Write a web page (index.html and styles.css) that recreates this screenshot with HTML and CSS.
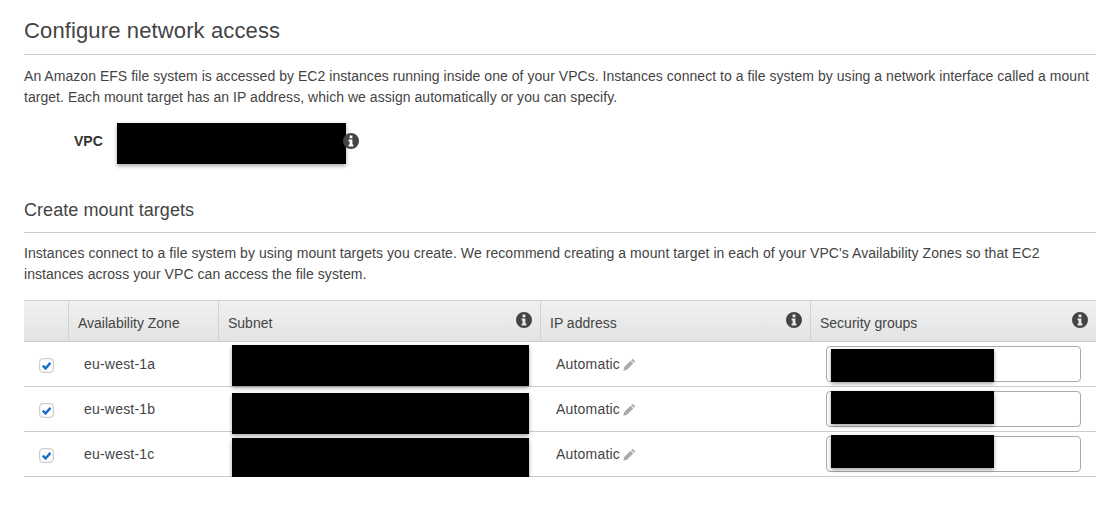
FILE: index.html
```html
<!DOCTYPE html>
<html lang="en">
<head>
    <meta charset="UTF-8">
    <meta name="viewport" content="width=device-width, initial-scale=1.0">
    <title>Configure network access</title>
    <link rel="stylesheet" href="styles.css">
</head>
<body>
    <svg class="icon-defs" width="0" height="0">
        <symbol id="info" viewBox="0 0 16 16">
            <path fill-rule="evenodd" d="M8 0a8 8 0 1 0 0 16A8 8 0 0 0 8 0zM6.6 2.6h2.8v2.6H6.6zM5.6 6.4h3.8v5.2h1v2H5.6v-2h1V8.400h-1z"/>
        </symbol>
        <symbol id="pencil" viewBox="0 0 14 14">
            <path d="M10.300 .8l2.900 2.900-1.500 1.500-2.900-2.900zM8.100 3l2.900 2.900-6.700 6.700-4 1.200 1.100-4.100z"/>
        </symbol>
        <symbol id="tick" viewBox="0 0 14 14">
            <path d="M3 7.200l3 3 5.200-6" fill="none" stroke="#1a6ec8" stroke-width="2.600"/>
        </symbol>
    </svg>

    <div class="page">
        <h2 class="title">Configure network access</h2>
        <p class="intro">An Amazon EFS file system is accessed by EC2 instances running inside one of your VPCs. Instances connect to a file system by using a network interface called a mount target. Each mount target has an IP address, which we assign automatically or you can specify.</p>

        <div class="vpc-row">
            <label class="vpc-label">VPC</label>
            <div class="redact vpc-redact"></div>
            <svg class="info vpc-info"><use href="#info"/></svg>
        </div>

        <h3 class="subtitle">Create mount targets</h3>
        <p class="intro sub-intro">Instances connect to a file system by using mount targets you create. We recommend creating a mount target in each of your VPC's Availability Zones so that EC2 instances across your VPC can access the file system.</p>

        <div class="targets">
            <div class="row head">
                <div class="cell"></div>
                <div class="cell">Availability Zone</div>
                <div class="cell">Subnet<svg class="info"><use href="#info"/></svg></div>
                <div class="cell">IP address<svg class="info"><use href="#info"/></svg></div>
                <div class="cell">Security groups<svg class="info"><use href="#info"/></svg></div>
            </div>
            <div class="row">
                <div class="cell check-cell"><span class="check"><svg><use href="#tick"/></svg></span></div>
                <div class="cell zone">eu-west-1a</div>
                <div class="cell"><div class="redact subnet-redact first"></div></div>
                <div class="cell ip">Automatic<svg class="pencil"><use href="#pencil"/></svg></div>
                <div class="cell sg-cell"><div class="sg-box"></div><div class="redact sg-redact first"></div></div>
            </div>
            <div class="row">
                <div class="cell check-cell"><span class="check"><svg><use href="#tick"/></svg></span></div>
                <div class="cell zone">eu-west-1b</div>
                <div class="cell"><div class="redact subnet-redact"></div></div>
                <div class="cell ip">Automatic<svg class="pencil"><use href="#pencil"/></svg></div>
                <div class="cell sg-cell"><div class="sg-box"></div><div class="redact sg-redact second"></div></div>
            </div>
            <div class="row">
                <div class="cell check-cell"><span class="check"><svg><use href="#tick"/></svg></span></div>
                <div class="cell zone">eu-west-1c</div>
                <div class="cell"><div class="redact subnet-redact"></div></div>
                <div class="cell ip">Automatic<svg class="pencil"><use href="#pencil"/></svg></div>
                <div class="cell sg-cell"><div class="sg-box"></div><div class="redact sg-redact last"></div></div>
            </div>
        </div>
    </div>
</body>
</html>
```

FILE: styles.css
```css
*{
    box-sizing: border-box;
    padding: 0;
    margin: 0;
}
body{
    background: #fff;
    color: #444;
    font-family: "Liberation Sans", Arial, sans-serif;
    font-size: 14px;
    overflow: hidden;
}
.icon-defs{
    position: absolute;
}
.page{
    padding: 17px 9px 0 24px;
}
.title{
    font-size: 22px;
    font-weight: 400;
    letter-spacing: .13px;
    line-height: 27px;
    padding-bottom: 10px;
    border-bottom: 1px solid #ccc;
}
.intro{
    margin-top: 11px;
    line-height: 21px;
    letter-spacing: .04px;
}
.vpc-row{
    display: flex;
    align-items: center;
    height: 41px;
    margin-top: 15px;
}
.vpc-label{
    width: 93px;
    padding-left: 50px;
    margin-bottom: 6px;
    font-weight: 700;
    color: #333;
}
.redact{
    background: #000;
    box-shadow: 0 2px 4px rgba(0, 0, 0, .35);
}
.vpc-redact{
    width: 229px;
    height: 41px;
}
.info{
    width: 16px;
    height: 16px;
    fill: #444;
}
.vpc-info{
    margin-left: -3px;
    margin-bottom: 6px;
}
.subtitle{
    margin-top: 35px;
    font-size: 18px;
    font-weight: 400;
    letter-spacing: .05px;
    line-height: 23px;
    padding-bottom: 10px;
    border-bottom: 1px solid #ccc;
}
.sub-intro{
    margin-top: 10px;
    letter-spacing: .06px;
}
.targets{
    margin-top: 15px;
}
.row{
    display: grid;
    grid-template-columns: 45px 150px 322px 270px 285px;
    height: 45px;
    border-bottom: 1px solid #ccc;
}
.head{
    height: 42px;
    border-top: 1px solid #ccc;
    background: linear-gradient(#f1f1f1, #e3e3e3);
}
.cell{
    position: relative;
    display: flex;
    align-items: center;
    padding-left: 9px;
}
.head .cell{
    padding-top: 4px;
    padding-right: 8px;
    justify-content: space-between;
    border-right: 1px solid #d2d2d2;
}
.head .cell:last-child{
    border-right: 0;
}
.head .info{
    margin-top: -6px;
}
.check-cell{
    padding-left: 15px;
    padding-top: 3px;
}
.check{
    display: block;
    width: 15px;
    height: 15px;
    border: 1px solid #ccc;
    border-radius: 4px;
    background: #fff;
    box-shadow: inset 0 0 2px rgba(0, 0, 0, .15);
}
.check svg{
    display: block;
    width: 13px;
    height: 13px;
}
.zone,
.ip{
    padding-left: 15px;
    letter-spacing: .2px;
}
.pencil{
    width: 13px;
    height: 13px;
    margin-left: 3px;
    fill: #aaa;
}
.subnet-redact{
    position: absolute;
    left: 13px;
    top: 6px;
    width: 297px;
    height: 41px;
}
.subnet-redact.first{
    top: 3px;
}
.sg-box{
    width: 255px;
    height: 36px;
    margin-left: 6px;
    border: 1px solid #aaa;
    border-radius: 4px;
    background: #fff;
}
.sg-redact{
    position: absolute;
    left: 20px;
    top: 7px;
    width: 163px;
    height: 33px;
}
.sg-redact.second{
    top: 4px;
}
.sg-redact.last{
    top: 3px;
}
```
